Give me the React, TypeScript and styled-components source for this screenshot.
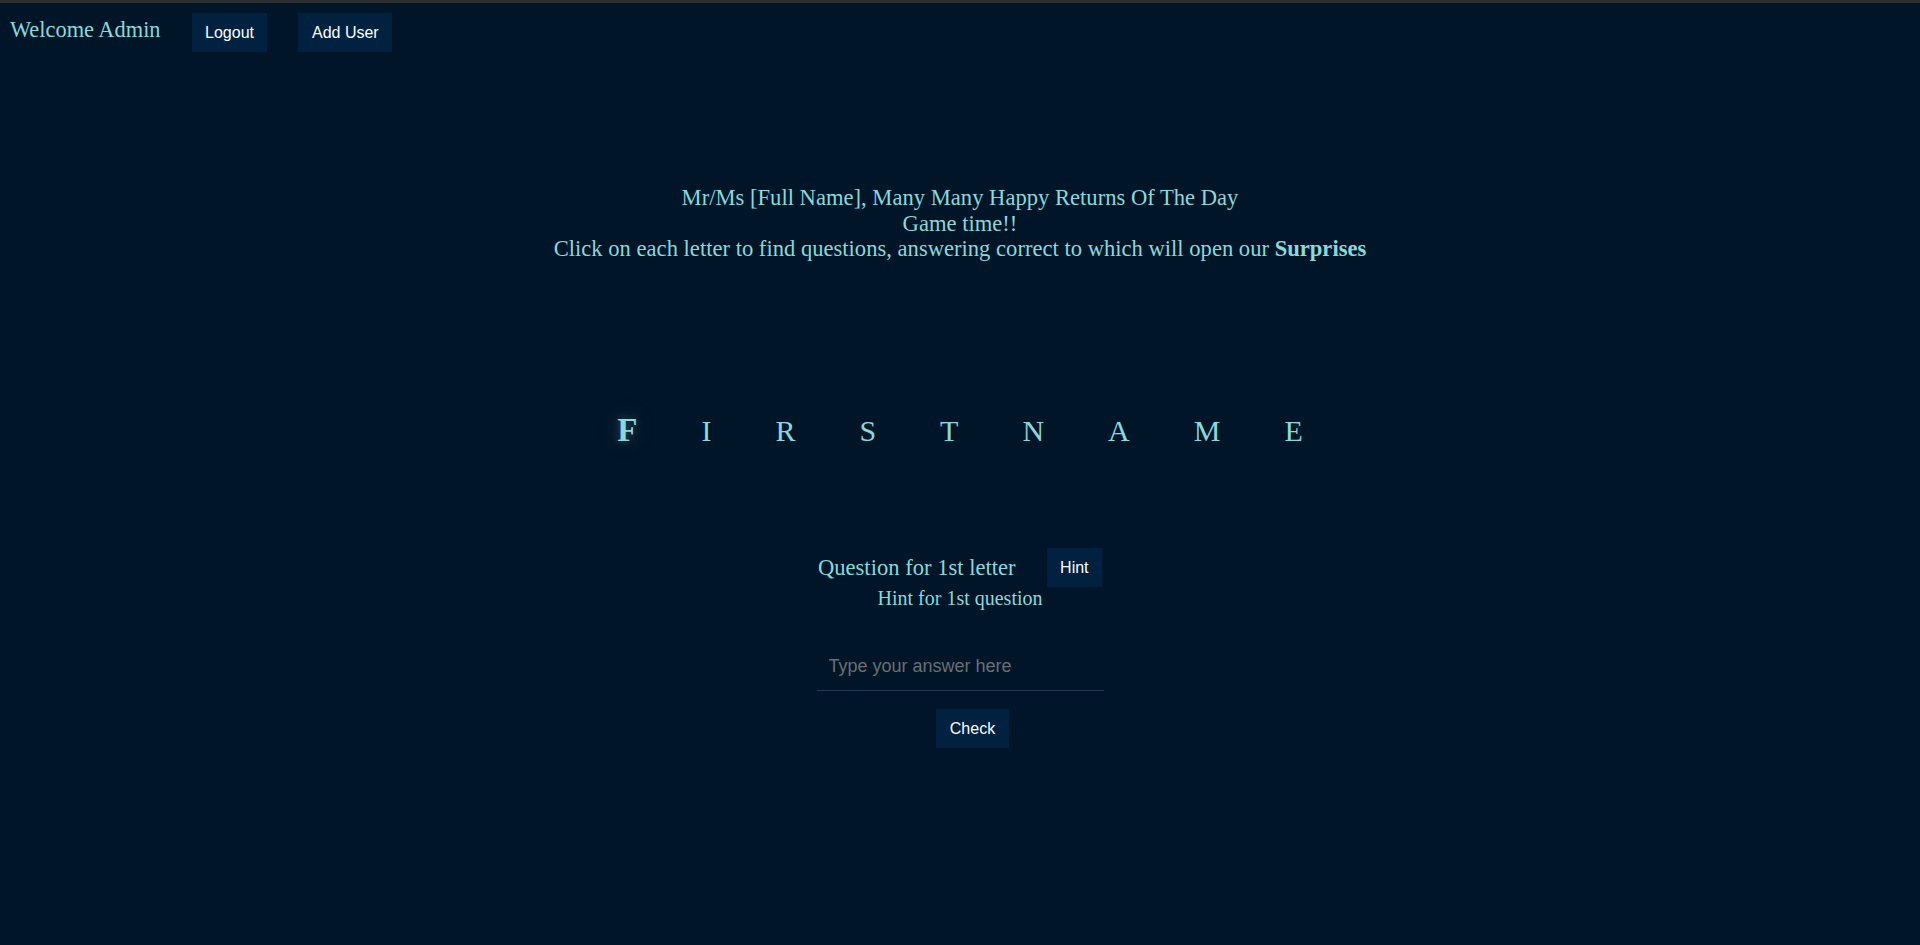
import React, { useState } from 'react';
import styled, { createGlobalStyle } from 'styled-components';

const GlobalStyle = createGlobalStyle`
  html, body {
    margin: 0;
    padding: 0;
    background: #011528;
  }
  body {
    border-top: 3px solid #2c2f32;
    font-family: "Liberation Serif", "Times New Roman", serif;
    color: #8ad8dc;
    min-height: 942px;
    overflow: hidden;
  }
`;

const Page = styled.div`
  display: flex;
  flex-direction: column;
  align-items: center;
`;

const Navbar = styled.nav`
  align-self: stretch;
  display: flex;
  align-items: center;
  gap: 31px;
  padding: 10px 10px 0;
`;

const Welcome = styled.span`
  font-size: 22.4px;
  margin-top: -6px;
`;

const Button = styled.button`
  background: #00213f;
  color: #ffffff;
  border: none;
  font-family: "Liberation Sans", Arial, sans-serif;
  font-size: 16px;
  height: 39px;
  padding: 0 13.5px;
  cursor: pointer;
`;

const Greeting = styled.div`
  margin-top: 133px;
  text-align: center;
  font-size: 22.6px;
  line-height: 25.7px;

  b {
    font-weight: bold;
  }
`;

const Letters = styled.div`
  display: flex;
  align-items: baseline;
  gap: 64px;
  margin-top: 150px;
`;

const Letter = styled.span<{ $active: boolean }>`
  font-size: ${(p) => (p.$active ? '33px' : '30px')};
  font-weight: ${(p) => (p.$active ? 'bold' : 'normal')};
  text-shadow: ${(p) =>
    p.$active
      ? '0 0 10px rgba(190, 210, 225, 0.25), 0 0 26px rgba(190, 210, 225, 0.22), 0 0 40px rgba(190, 210, 225, 0.14)'
      : 'none'};
  cursor: pointer;
`;

const QuestionRow = styled.div`
  display: flex;
  align-items: center;
  gap: 31px;
  margin-top: 99px;
`;

const QuestionText = styled.span`
  font-size: 22.6px;
`;

const HintText = styled.div`
  font-size: 20px;
`;

const AnswerInput = styled.input`
  margin-top: 36px;
  width: 287px;
  box-sizing: border-box;
  background: transparent;
  border: none;
  border-bottom: 1px solid #1b3a57;
  color: #ffffff;
  font-family: "Liberation Sans", Arial, sans-serif;
  font-size: 18px;
  padding: 10px 12px 13px;
  outline: none;

  &::placeholder {
    color: #6b6f73;
  }
`;

const CheckButton = styled(Button)`
  margin-top: 18px;
  margin-left: 25px;
`;

const NAME = 'FIRSTNAME'.split('');

export default function App() {
  const [active, setActive] = useState(0);
  const [answer, setAnswer] = useState('');

  return (
    <Page>
      <GlobalStyle />
      <Navbar>
        <Welcome>Welcome Admin</Welcome>
        <Button>Logout</Button>
        <Button>Add User</Button>
      </Navbar>
      <Greeting>
        Mr/Ms [Full Name], Many Many Happy Returns Of The Day
        <br />
        Game time!!
        <br />
        Click on each letter to find questions, answering correct to which will open our <b>Surprises</b>
      </Greeting>
      <Letters>
        {NAME.map((ch, i) => (
          <Letter key={i} $active={i === active} onClick={() => setActive(i)}>
            {ch}
          </Letter>
        ))}
      </Letters>
      <QuestionRow>
        <QuestionText>Question for 1st letter</QuestionText>
        <Button>Hint</Button>
      </QuestionRow>
      <HintText>Hint for 1st question</HintText>
      <AnswerInput
        placeholder="Type your answer here"
        value={answer}
        onChange={(e) => setAnswer(e.target.value)}
      />
      <CheckButton>Check</CheckButton>
    </Page>
  );
}
